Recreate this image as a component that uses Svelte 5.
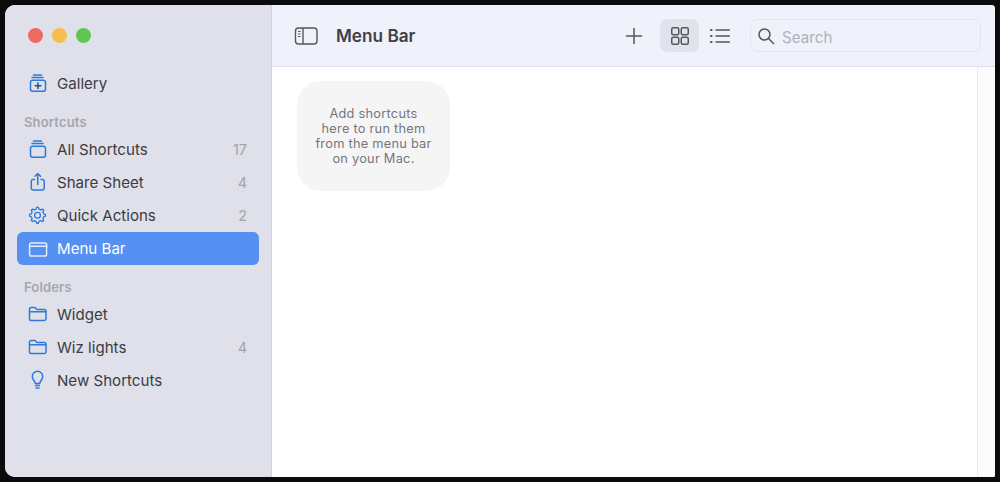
<script>
	const shortcuts = [
		{ name: 'All Shortcuts', count: 17, icon: 'stack' },
		{ name: 'Share Sheet', count: 4, icon: 'share' },
		{ name: 'Quick Actions', count: 2, icon: 'gear' },
		{ name: 'Menu Bar', icon: 'menubar', active: true }
	];
	const folders = [
		{ name: 'Widget', icon: 'folder' },
		{ name: 'Wiz lights', count: 4, icon: 'folder' },
		{ name: 'New Shortcuts', icon: 'bulb' }
	];

	// scalloped outline for the gear, 8 teeth
	const gearPath = (() => {
		const pts = [];
		for (let i = 0; i < 8; i++) {
			for (const [off, r] of [[-0.3, 6.3], [-0.14, 8], [0.14, 8], [0.3, 6.3]]) {
				const a = ((i + off) * Math.PI) / 4;
				pts.push((10.5 + r * Math.sin(a)).toFixed(2) + ' ' + (10.3 - r * Math.cos(a)).toFixed(2));
			}
		}
		return 'M' + pts.join('L') + 'Z';
	})();
</script>

{#snippet icon(kind)}
	<svg class="icon" width="24" height="22" viewBox="0 0 24 22" fill="none" stroke="currentColor" stroke-width="1.500" stroke-linecap="round" stroke-linejoin="round">
		{#if kind === 'gallery'}
			<path d="M6.500 2h8M5 4.600h11" />
			<rect x="3.500" y="7.300" width="15" height="11" rx="2.200" />
			<path d="M11 10v5.500M8.200 12.800h5.600" stroke="#1b4f9c" stroke-width="1.500" />
		{:else if kind === 'stack'}
			<path d="M6.500 2h8M5 4.600h11" />
			<rect x="3.500" y="7.300" width="15" height="11" rx="2.200" />
		{:else if kind === 'share'}
			<path d="M7.500 7.500H6a1.700 1.700 0 0 0-1.700 1.700v7A1.700 1.700 0 0 0 6 17.900h9.500a1.700 1.700 0 0 0 1.700-1.700v-7a1.700 1.700 0 0 0-1.700-1.700H14" />
			<path d="M10.750 12.500V1.500M8 4.200l2.750-2.700 2.750 2.700" />
		{:else if kind === 'gear'}
			<path d={gearPath} stroke-width="1.300" />
			<circle cx="10.500" cy="10.300" r="2.900" stroke-width="1.300" />
		{:else if kind === 'menubar'}
			<rect x="2.600" y="5" width="17" height="13" rx="1.800" />
			<path d="M2.600 8.200h17" />
		{:else if kind === 'folder'}
			<path d="M2.500 8V5.300A1.800 1.800 0 0 1 4.300 3.500h3.700l2 2h7.200a1.800 1.800 0 0 1 1.800 1.800v7.400a1.800 1.800 0 0 1-1.800 1.800H4.300a1.800 1.800 0 0 1-1.800-1.800z" />
			<path d="M2.500 7.800h16.500" />
		{:else if kind === 'bulb'}
			<path d="M8.200 13.500c0-2.500-2.900-3.700-2.900-7a5.200 5.200 0 0 1 10.400 0c0 3.300-2.900 4.500-2.900 7z" />
			<path d="M8.500 15.600h4M9 18h3" stroke-width="1.500" />
		{/if}
	</svg>
{/snippet}

{#snippet row(item)}
	<li class="row" class:active={item.active}>
		{@render icon(item.icon)}
		<span class="name">{item.name}</span>
		{#if item.count}<span class="count">{item.count}</span>{/if}
	</li>
{/snippet}

<div class="frame">
	<div class="window">
		<aside class="sidebar">
			<div class="lights">
				<span class="light red"></span>
				<span class="light yellow"></span>
				<span class="light green"></span>
			</div>
			<ul>
				{@render row({ name: 'Gallery', icon: 'gallery' })}
			</ul>
			<h2>Shortcuts</h2>
			<ul>
				{#each shortcuts as item}
					{@render row(item)}
				{/each}
			</ul>
			<h2>Folders</h2>
			<ul>
				{#each folders as item}
					{@render row(item)}
				{/each}
			</ul>
		</aside>

		<main class="main">
			<header class="toolbar">
				<svg class="sidebar-toggle" width="24" height="18" viewBox="0 0 24 18" fill="none" stroke="currentColor" stroke-width="1.400">
					<rect x="1.500" y="1" width="21.500" height="16" rx="3" />
					<path d="M9 1v16" />
					<path d="M4 4.500h2.500M4 7h2.500M4 9.500h2.500" stroke-width="1.200" />
				</svg>
				<h1>Menu Bar</h1>
				<svg class="plus" width="18" height="18" viewBox="0 0 18 18" fill="none" stroke="currentColor" stroke-width="1.500" stroke-linecap="round">
					<path d="M9 1.500v15M1.500 9h15" />
				</svg>
				<div class="view-toggle selected">
					<svg width="18" height="18" viewBox="0 0 18 18" fill="none" stroke="currentColor" stroke-width="1.500">
						<rect x="0.750" y="0.750" width="7" height="7" rx="1.500" />
						<rect x="10.250" y="0.750" width="7" height="7" rx="1.500" />
						<rect x="0.750" y="10.250" width="7" height="7" rx="1.500" />
						<rect x="10.250" y="10.250" width="7" height="7" rx="1.500" />
					</svg>
				</div>
				<div class="view-toggle">
					<svg width="20" height="16" viewBox="0 0 20 16" fill="none" stroke="currentColor" stroke-width="1.400" stroke-linecap="round">
						<path d="M6 2h13.500M6 8h13.500M6 14h13.500" />
						<path d="M1 2h.5M1 8h.5M1 14h.5" stroke-width="2.200" />
					</svg>
				</div>
				<label class="search">
					<svg width="18" height="18" viewBox="0 0 18 18" fill="none" stroke="currentColor" stroke-width="1.500" stroke-linecap="round">
						<circle cx="7.500" cy="7.500" r="5.500" />
						<path d="m11.800 11.800 4.700 4.700" />
					</svg>
					<span>Search</span>
				</label>
			</header>
			<div class="content">
				<div class="grid">
					<div class="card">Add shortcuts here to run them from the menu bar on your Mac.</div>
				</div>
				<div class="scroll-track"></div>
			</div>
		</main>
	</div>
</div>

<style>
	:global(body) {
		background: #0b0b0b;
	}

	.frame {
		box-sizing: border-box;
		width: 1000px;
		height: 482px;
		padding: 5px;
		font-family: Inter, "Liberation Sans", sans-serif;
	}

	.window {
		display: flex;
		height: 100%;
		overflow: hidden;
		border-radius: 10px 4px 2px 10px;
		background: #fff;
	}

	.sidebar {
		box-sizing: border-box;
		flex: 0 0 267px;
		padding: 0 12px;
		background: #dfe0e9;
		border-right: 1px solid #d0d1dc;
	}

	.lights {
		display: flex;
		gap: 9px;
		padding: 23px 0 0 11px;
		height: 39px;
	}

	.light {
		width: 15px;
		height: 15px;
		border-radius: 50%;
	}
	.red { background: #ec6a5e; }
	.yellow { background: #f4bf4f; }
	.green { background: #61c554; }

	ul {
		list-style: none;
		margin: 0;
		padding: 0;
	}

	h2 {
		box-sizing: border-box;
		margin: 0;
		padding: 14px 0 0 7px;
		height: 33px;
		font-size: 13px;
		line-height: 17px;
		font-weight: 600;
		color: #a5a6ae;
		letter-spacing: 0.15px;
	}

	.row {
		display: flex;
		align-items: center;
		height: 33px;
		padding: 0 12px 0 10px;
		border-radius: 6px;
		color: #3c3c43;
		font-size: 15.100px;
	}

	.icon {
		flex: none;
		margin-right: 6px;
		color: #2f7ad9;
	}

	.name {
		flex: 1;
	}

	.count {
		color: #a3a4ac;
		font-size: 14.500px;
	}

	.active {
		background: #5590f2;
		color: #fff;
	}
	.active .icon {
		color: #e4ecfb;
	}

	.main {
		flex: 1;
		display: flex;
		flex-direction: column;
		min-width: 0;
	}

	.toolbar {
		box-sizing: border-box;
		display: flex;
		align-items: center;
		height: 62px;
		padding: 0 14px 0 22px;
		background: #eff2fb;
		border-bottom: 1px solid #dfdfe8;
		color: #55565e;
	}

	h1 {
		flex: 1;
		margin: 0 0 0 18px;
		font-size: 17.200px;
		font-weight: 600;
		color: #3f4046;
	}

	.plus {
		margin-right: 17px;
	}

	.view-toggle {
		display: flex;
		align-items: center;
		justify-content: center;
		width: 39px;
		height: 33px;
		border-radius: 7px;
		margin-right: 1px;
	}
	.selected {
		background: #e1e3ec;
	}

	.search {
		display: flex;
		align-items: center;
		gap: 7px;
		box-sizing: border-box;
		width: 231px;
		height: 33px;
		margin-left: 10px;
		padding: 0 6px;
		border: 1px solid #e3e6f0;
		border-radius: 7px;
		font-size: 15.200px;
		color: #b0b1b9;
	}
	.search svg {
		color: #55565e;
	}
	.search span {
		padding-top: 3px;
	}

	.content {
		flex: 1;
		display: flex;
		min-height: 0;
	}

	.grid {
		flex: 1;
		padding: 14px 0 0 25px;
	}

	.card {
		box-sizing: border-box;
		display: flex;
		align-items: center;
		text-align: center;
		width: 153px;
		height: 110px;
		padding: 0 17px;
		border-radius: 24px;
		background: #f5f5f6;
		color: #75767c;
		font-size: 12.800px;
		line-height: 15.200px;
		letter-spacing: 0.25px;
	}

	.scroll-track {
		flex: 0 0 18px;
		box-sizing: border-box;
		background: #fbfbfc;
		border-left: 1px solid #eaeaec;
	}
</style>
